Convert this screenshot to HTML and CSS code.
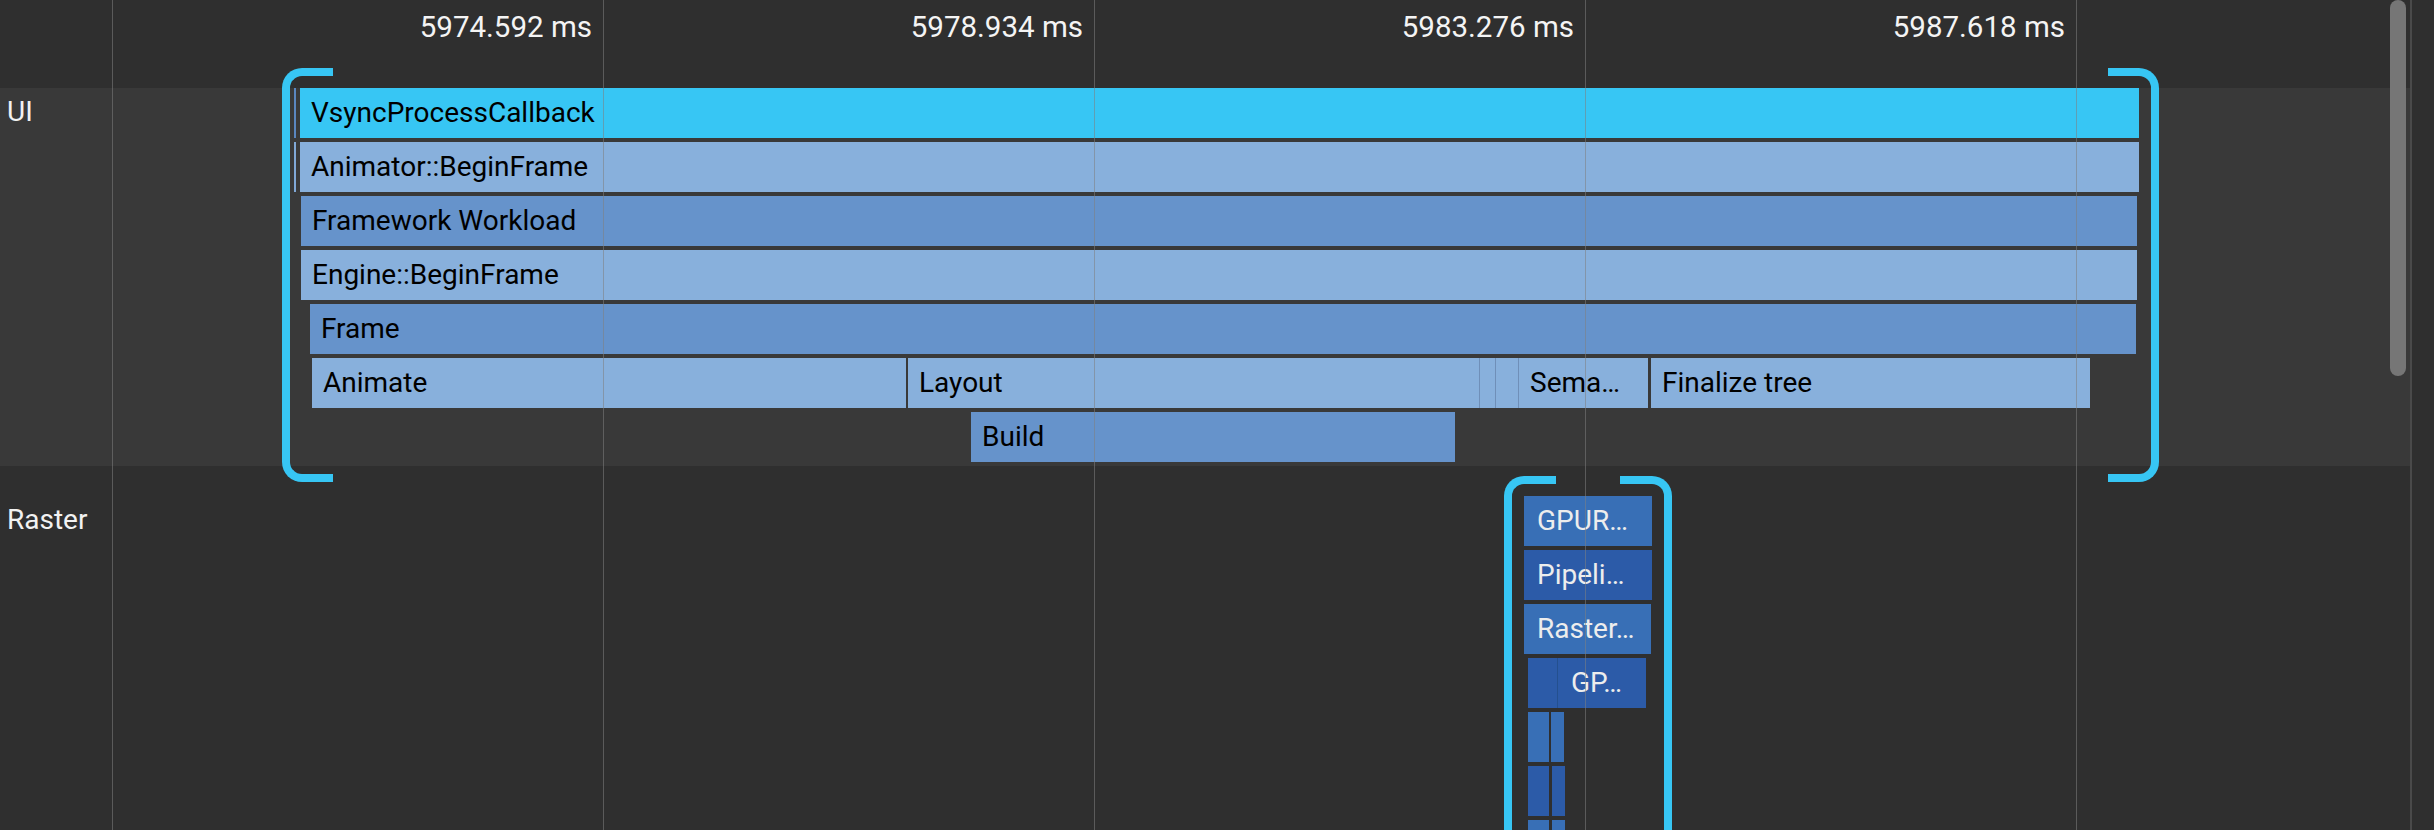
FILE: index.html
```html
<!DOCTYPE html>
<html lang="en">
<head>
<meta charset="utf-8">
<title>Timeline</title>
<link rel="stylesheet" href="styles.css">
</head>
<body>
<div class="app">
  <div class="timeline">
    <div class="axis">
      <div class="tick">5974.592 ms</div>
      <div class="tick">5978.934 ms</div>
      <div class="tick">5983.276 ms</div>
      <div class="tick">5987.618 ms</div>
    </div>

    <section class="group group-ui">
      <div class="group-label">UI</div>
      <div class="track">
        <div class="row">
          <div class="bar medium thin" style="left:181px;width:2px"></div>
          <div class="bar selected" style="left:187px;width:1839px">VsyncProcessCallback</div>
        </div>
        <div class="row">
          <div class="bar light thin" style="left:181px;width:2px"></div>
          <div class="bar light" style="left:187px;width:1839px">Animator::BeginFrame</div>
        </div>
        <div class="row">
          <div class="bar medium" style="left:188px;width:1836px">Framework Workload</div>
        </div>
        <div class="row">
          <div class="bar light" style="left:188px;width:1836px">Engine::BeginFrame</div>
        </div>
        <div class="row">
          <div class="bar medium" style="left:197px;width:1826px">Frame</div>
        </div>
        <div class="row">
          <div class="bar light" style="left:199px;width:594px">Animate</div>
          <div class="bar light" style="left:795px;width:571px">Layout</div>
          <div class="bar light tick-edge" style="left:1366px;width:16px"></div>
          <div class="bar light tick-edge" style="left:1382px;width:23px"></div>
          <div class="bar light tick-edge" style="left:1405px;width:130px">Sema…</div>
          <div class="bar light" style="left:1538px;width:439px">Finalize tree</div>
        </div>
        <div class="row">
          <div class="bar medium" style="left:858px;width:484px">Build</div>
        </div>
      </div>
    </section>

    <section class="group group-raster">
      <div class="group-label">Raster</div>
      <div class="track">
        <div class="row">
          <div class="bar raster" style="left:1411px;width:128px">GPUR…</div>
        </div>
        <div class="row">
          <div class="bar raster dark" style="left:1411px;width:128px">Pipeli…</div>
        </div>
        <div class="row">
          <div class="bar raster" style="left:1411px;width:127px">Raster…</div>
        </div>
        <div class="row">
          <div class="bar raster dark" style="left:1415px;width:29px"></div>
          <div class="bar raster dark split" style="left:1444px;width:89px">GP…</div>
        </div>
        <div class="row">
          <div class="bar raster" style="left:1415px;width:21px"></div>
          <div class="bar raster" style="left:1438px;width:7px"></div>
        </div>
        <div class="row">
          <div class="bar raster dark" style="left:1415px;width:21px"></div>
          <div class="bar raster dark" style="left:1439px;width:6px"></div>
        </div>
        <div class="row">
          <div class="bar raster" style="left:1415px;width:21px"></div>
          <div class="bar raster" style="left:1439px;width:5px"></div>
        </div>
      </div>
    </section>

    <div class="gridlines">
      <div class="gridline"></div>
      <div class="gridline"></div>
      <div class="gridline"></div>
      <div class="gridline"></div>
      <div class="gridline"></div>
    </div>

    <div class="bracket bracket-left ui-bracket"></div>
    <div class="bracket bracket-right ui-bracket ui-bracket-right"></div>
    <div class="bracket bracket-left raster-bracket"></div>
    <div class="bracket bracket-right raster-bracket raster-bracket-right"></div>

    <div class="scrollbar"></div>
  </div>
  <div class="divider"></div>
  <div class="gutter"></div>
</div>
</body>
</html>
```

FILE: styles.css
```css
* { box-sizing: border-box; }

html, body {
  margin: 0;
  padding: 0;
  background: #2f2f2f;
}

body {
  width: 2434px;
  height: 830px;
  overflow: hidden;
  font-family: Roboto, "Liberation Sans", sans-serif;
}

.app {
  display: flex;
  width: 2434px;
  height: 830px;
}

.timeline {
  position: relative;
  width: 2410px;
  height: 830px;
  overflow: hidden;
  display: flex;
  flex-direction: column;
  flex: none;
}

.divider {
  width: 2px;
  background: #4a4a4a;
  flex: none;
}

.gutter {
  flex: 1;
  background: #2f2f2f;
}

/* time axis */
.axis {
  height: 88px;
  flex: none;
  display: flex;
  padding-left: 113px;
}

.tick {
  width: 491px;
  flex: none;
  text-align: right;
  padding-right: 12px;
  line-height: 54px;
  font-size: 29.5px;
  color: #f4f4f4;
  white-space: nowrap;
}

/* groups */
.group {
  display: flex;
  flex: none;
}

.group-ui {
  background: #393939;
  height: 378px;
}

.group-raster {
  padding-top: 30px;
  flex: 1;
}

.group-label {
  width: 113px;
  flex: none;
  padding-left: 7px;
  height: 50px;
  line-height: 48px;
  font-size: 28px;
  color: #f2f2f2;
}

.track {
  flex: 1;
  display: flex;
  flex-direction: column;
  gap: 4px;
}

.row {
  position: relative;
  height: 50px;
  flex: none;
}

.bar {
  position: absolute;
  top: 0;
  height: 50px;
  padding-left: 11px;
  line-height: 50px;
  font-size: 28px;
  color: #000;
  white-space: nowrap;
  overflow: hidden;
}

.bar.thin { padding: 0; }

.selected { background: #37c6f4; }
.light { background: #88b0dc; }
.medium { background: #6693cb; }
.medium.thin { background: #5a86bf; }
.light.thin { background: #80a8d6; }

.tick-edge { border-left: 1px solid #6f8fb8; }

.raster {
  background: #386fb6;
  color: #ededed;
  padding-left: 13px;
}

.raster.dark { background: #2c5ba8; }
.raster.split { border-left: 1px solid #24508f; }

/* gridlines overlay */
.gridlines {
  position: absolute;
  top: 0;
  left: 0;
  bottom: 0;
  display: flex;
  padding-left: 112px;
  pointer-events: none;
}

.gridline {
  width: 491px;
  flex: none;
  border-left: 1px solid rgba(128, 128, 128, 0.55);
}

/* selection brackets */
.bracket {
  position: absolute;
  border: 8px solid #37c6f4;
  pointer-events: none;
}

.bracket-left {
  border-right: none;
  border-radius: 20px 0 0 20px;
}

.bracket-right {
  border-left: none;
  border-radius: 0 20px 20px 0;
}

.ui-bracket {
  top: 68px;
  left: 282px;
  width: 51px;
  height: 414px;
}

.ui-bracket-right { left: 2108px; }

.raster-bracket {
  top: 476px;
  left: 1504px;
  width: 52px;
  height: 420px;
}

.raster-bracket-right { left: 1620px; }

/* scrollbar */
.scrollbar {
  position: absolute;
  top: 0;
  left: 2390px;
  width: 16px;
  height: 376px;
  border-radius: 8px;
  background: #767676;
}
```
